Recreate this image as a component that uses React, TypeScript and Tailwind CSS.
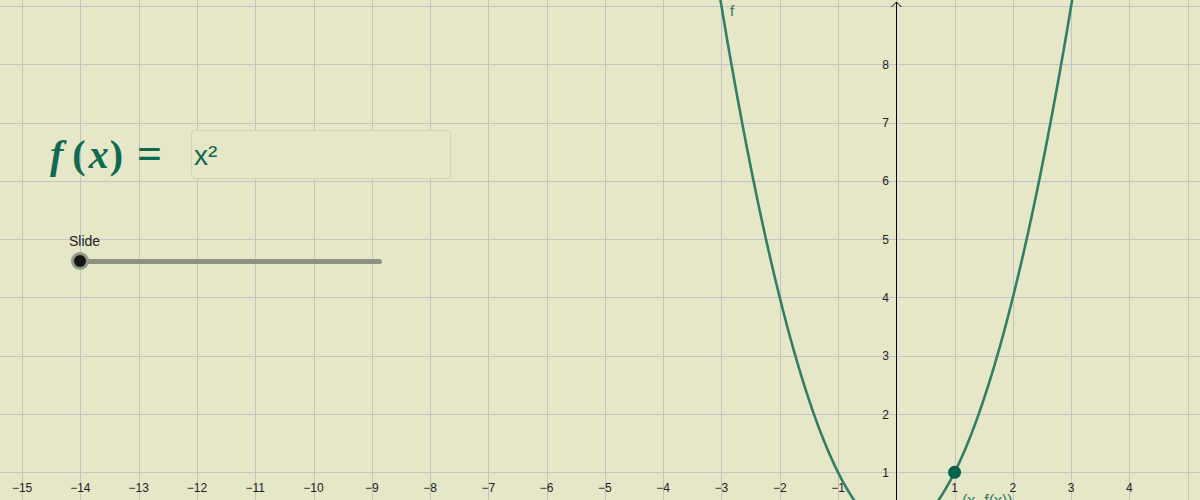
import React from "react";

const U = 58.28;
const OX = 896.3;
const OY = 530.6;

const px = (x: number) => OX + x * U;
const py = (y: number) => OY - y * U;

function Graph() {
  const vLines: number[] = [];
  for (let k = -16; k <= 6; k++) vLines.push(Math.round(px(k)) + 0.5);
  const hLines: number[] = [];
  for (let k = 0; k <= 10; k++) hLines.push(Math.round(py(k)) + 0.5);

  const pts: string[] = [];
  for (let x = -3.2; x <= 3.2001; x += 0.02) {
    pts.push(`${px(x).toFixed(2)},${py(x * x).toFixed(2)}`);
  }

  const xTicks = [-15, -14, -13, -12, -11, -10, -9, -8, -7, -6, -5, -4, -3, -2, -1, 1, 2, 3, 4];
  const yTicks = [1, 2, 3, 4, 5, 6, 7, 8];
  const axisX = Math.round(OX) + 0.5;

  return (
    <svg className="absolute inset-0" width={1200} height={500} viewBox="0 0 1200 500">
      {vLines.map((x) => (
        <line key={"v" + x} x1={x} x2={x} y1={0} y2={500} stroke="#c3c2c6" strokeWidth={1} />
      ))}
      {hLines.map((y) => (
        <line key={"h" + y} x1={0} x2={1200} y1={y} y2={y} stroke="#c3c2c6" strokeWidth={1} />
      ))}
      <line x1={axisX} x2={axisX} y1={2} y2={500} stroke="#000" strokeWidth={1} />
      <polyline points={`${axisX - 5},7 ${axisX},2 ${axisX + 5},7`} fill="none" stroke="#000" strokeWidth={1} />
      <g fontFamily="'Liberation Sans', Arial, sans-serif" fontSize={12} fill="#222">
        {xTicks.map((k) => (
          <text key={"xt" + k} x={px(k)} y={492} textAnchor="middle">
            {k < 0 ? "\u2212" + Math.abs(k) : String(k)}
          </text>
        ))}
        {yTicks.map((k) => (
          <text key={"yt" + k} x={889} y={py(k) + 4.5} textAnchor="end">
            {k}
          </text>
        ))}
      </g>
      <polyline points={pts.join(" ")} fill="none" stroke="#2f8066" strokeWidth={2.6} strokeLinejoin="round" />
      <text x={730} y={16} fontFamily="'Liberation Sans', Arial, sans-serif" fontSize={15} fill="#2f7a62">
        f
      </text>
      <circle cx={px(1)} cy={py(1)} r={6.5} fill="#006450" />
      <text x={962} y={506} fontFamily="'Liberation Sans', Arial, sans-serif" fontSize={16} fill="#2f7a62">
        (x, f(x))
      </text>
    </svg>
  );
}

function Slider() {
  return (
    <div className="absolute left-[61px] top-[232px] w-[330px]">
      <div className="text-[14px] leading-[18px] text-[#222] pl-[8px] font-['Liberation_Sans',Arial,sans-serif]">Slide</div>
      <div className="relative h-[22px] flex items-center">
        <div className="ml-[19px] h-[5px] w-[302px] rounded-full bg-[#8e9280]" />
        <div className="absolute left-[10px] top-[2px] w-[18px] h-[18px] rounded-full bg-[#8d9886] flex items-center justify-center">
          <div className="w-[12px] h-[12px] rounded-full bg-[#151515]" />
        </div>
      </div>
    </div>
  );
}

export default function App() {
  return (
    <div className="relative w-[1200px] h-[500px] overflow-hidden bg-[#e6e7c7]">
      <Graph />
      <div className="absolute left-[48px] top-[130px] flex items-center">
        <div className="w-[143px] flex items-baseline text-[#0d6b52] text-[40px] leading-[48px] font-['Liberation_Serif','Times_New_Roman',serif] font-bold">
          <span className="italic ml-[2px]">f</span>
          <span className="ml-[9px]">(</span>
          <span className="italic ml-[3px]">x</span>
          <span className="ml-[1px]">)</span>
          <span className="ml-[14px] text-[44px] leading-[48px] font-bold">=</span>
        </div>
        <div className="w-[260px] h-[49px] rounded-[4px] border border-[#d2d3bd] bg-[#e6e7c7] flex items-center pl-[2px] pt-[2px] text-[#0d6b52] text-[28px] font-['Liberation_Sans',Arial,sans-serif]">
          x²
        </div>
      </div>
      <Slider />
    </div>
  );
}
